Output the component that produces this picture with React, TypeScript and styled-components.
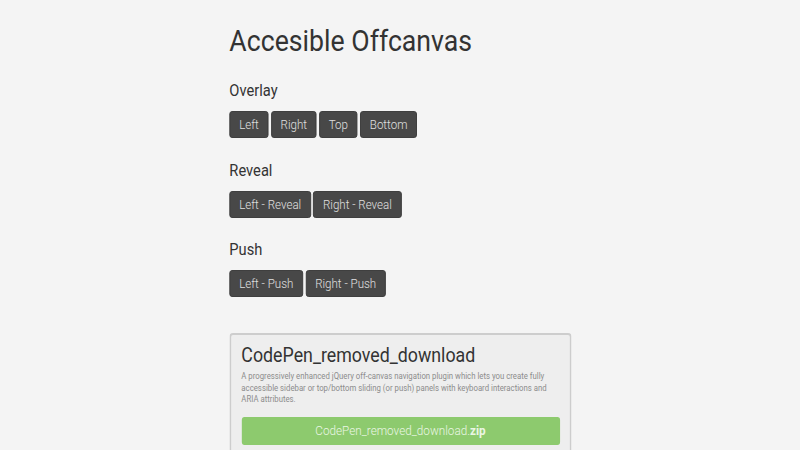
import React from 'react';
import styled, { createGlobalStyle } from 'styled-components';

const GlobalStyle = createGlobalStyle`
  html, body {
    margin: 0;
    padding: 0;
    background: #f4f4f4;
    font-family: Roboto, "Liberation Sans", sans-serif;
    color: #333;
  }
`;

const Page = styled.main`
  width: 385px;
  margin: 0 auto;
  padding-top: 23px;
  transform: scaleX(0.889);
  transform-origin: 50% 0;
`;

const Title = styled.h1`
  margin: 0 0 22px;
  font-size: 30px;
  font-weight: 400;
  line-height: 36px;
  color: #333;
`;

const Section = styled.section`
  margin-bottom: 22.5px;
`;

const SectionTitle = styled.h2`
  margin: 0 0 10px;
  font-size: 16.5px;
  font-weight: 400;
  line-height: 20px;
  color: #333;
`;

const ButtonRow = styled.div`
  display: flex;
  gap: 2.5px;
`;

const Button = styled.button`
  margin: 0;
  height: 27px;
  padding: 0 10px;
  border: 1px solid #393939;
  border-radius: 3px;
  background: #484848;
  color: #e0e0e0;
  font-family: inherit;
  font-size: 13px;
  font-weight: 300;
  cursor: pointer;
`;

const Download = styled.div`
  margin-top: 36px;
  padding: 8px 11.5px 12px;
  border: 2px solid #cdcdcd;
  border-bottom: none;
  border-radius: 4px 4px 0 0;
  background: #eeeeee;
`;

const DownloadTitle = styled.h3`
  margin: 0 0 4px;
  font-size: 20px;
  font-weight: 400;
  line-height: 24px;
  color: #333;
`;

const Description = styled.p`
  margin: 0 0 11px;
  font-size: 8.75px;
  line-height: 11.7px;
  color: #8c8c8c;
`;

const ZipLink = styled.a`
  display: flex;
  align-items: center;
  justify-content: center;
  height: 27.5px;
  border-radius: 3px;
  background: #8dca6e;
  color: #eaf6e4;
  font-size: 13.2px;
  font-weight: 300;
  text-decoration: none;

  b {
    font-weight: 700;
  }
`;

const groups = [
  { title: 'Overlay', buttons: ['Left', 'Right', 'Top', 'Bottom'] },
  { title: 'Reveal', buttons: ['Left - Reveal', 'Right - Reveal'] },
  { title: 'Push', buttons: ['Left - Push', 'Right - Push'] },
];

export default function App() {
  return (
    <>
      <GlobalStyle />
      <Page>
        <Title>Accesible Offcanvas</Title>
        {groups.map((g) => (
          <Section key={g.title}>
            <SectionTitle>{g.title}</SectionTitle>
            <ButtonRow>
              {g.buttons.map((b) => (
                <Button key={b}>{b}</Button>
              ))}
            </ButtonRow>
          </Section>
        ))}
        <Download>
          <DownloadTitle>CodePen_removed_download</DownloadTitle>
          <Description>
            A progressively enhanced jQuery off-canvas navigation plugin which
            lets you create fully accessible sidebar or top/bottom sliding (or
            push) panels with keyboard interactions and ARIA attributes.
          </Description>
          <ZipLink href="#">
            CodePen_removed_download.<b>zip</b>
          </ZipLink>
        </Download>
      </Page>
    </>
  );
}
